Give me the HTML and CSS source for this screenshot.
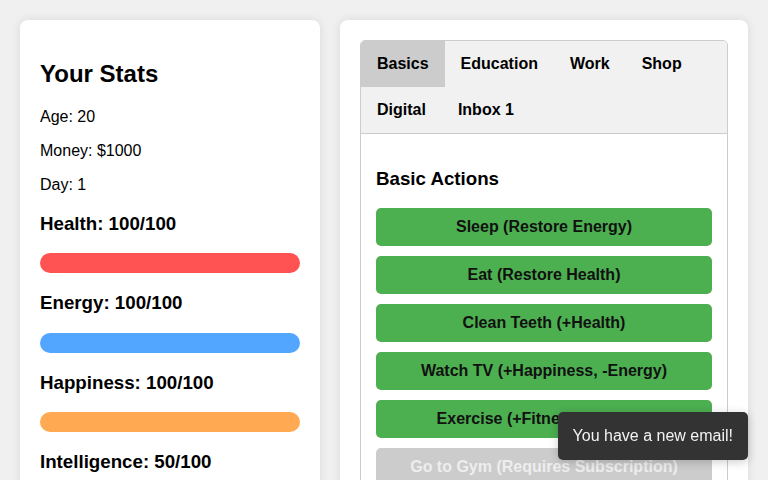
FILE: index.html
```html
<!DOCTYPE html>
<html>
<head>
<meta charset="utf-8">
<title>Life Sim</title>
<link rel="stylesheet" href="styles.css">
</head>
<body>
<div class="layout">
  <div class="card stats">
    <h2>Your Stats</h2>
    <p>Age: 20</p>
    <p>Money: $1000</p>
    <p>Day: 1</p>
    <h3>Health: 100/100</h3>
    <div class="bar bar-health"></div>
    <h3>Energy: 100/100</h3>
    <div class="bar bar-energy"></div>
    <h3>Happiness: 100/100</h3>
    <div class="bar bar-happy"></div>
    <h3>Intelligence: 50/100</h3>
    <div class="bar bar-intel"></div>
  </div>
  <div class="card main">
    <div class="tabs">
      <div class="tab-head">
        <button class="tab active">Basics</button>
        <button class="tab">Education</button>
        <button class="tab">Work</button>
        <button class="tab">Shop</button>
        <button class="tab">Digital</button>
        <button class="tab">Inbox 1</button>
      </div>
      <div class="tab-body">
        <h3>Basic Actions</h3>
        <button class="action">Sleep (Restore Energy)</button>
        <button class="action">Eat (Restore Health)</button>
        <button class="action">Clean Teeth (+Health)</button>
        <button class="action">Watch TV (+Happiness, -Energy)</button>
        <button class="action">Exercise (+Fitness, -Energy)</button>
        <button class="action" disabled>Go to Gym (Requires Subscription)</button>
        <button class="action">Shower (+Health)</button>
      </div>
    </div>
  </div>
</div>
<div class="toast">You have a new email!</div>
</body>
</html>
```
FILE: styles.css
```css
html, body {
  margin: 0;
  padding: 0;
}
body {
  background: #f0f0f0;
  font-family: "Liberation Sans", Arial, sans-serif;
  color: #000;
}
.layout {
  display: flex;
  align-items: flex-start;
  gap: 20px;
  padding: 20px;
}
.card {
  background: #fff;
  border-radius: 8px;
  box-shadow: 0 0 10px rgba(0, 0, 0, 0.1);
  padding: 20px;
}
.stats {
  width: 260px;
  flex: none;
}
.main {
  flex: 1;
}
h2 {
  font-size: 24px;
  margin: 20px 0;
}
h3 {
  font-size: 18.72px;
  margin: 18.72px 0;
}
p {
  font-size: 16px;
  margin: 16px 0;
}
.bar {
  height: 20px;
  border-radius: 10px;
  margin: 10px 0;
}
.bar-health { background: #ff5252; }
.bar-energy { background: #52a6ff; }
.bar-happy { background: #ffaa52; }
.bar-intel { background: #a36bff; }
.tabs {
  border: 1px solid #ccc;
  border-radius: 5px;
  overflow: hidden;
}
.tab-head {
  display: flex;
  flex-wrap: wrap;
  background: #f1f1f1;
  border-bottom: 1px solid #ccc;
}
.tab {
  background: inherit;
  border: none;
  padding: 14px 16px;
  font-family: inherit;
  font-size: 16px;
  font-weight: bold;
  color: #000;
  line-height: 18px;
}
.tab.active {
  background: #ccc;
}
.tab-body {
  padding: 15px;
}
.action {
  display: block;
  width: 100%;
  background: #4caf50;
  color: #111;
  border: none;
  border-radius: 5px;
  padding: 10px;
  margin-bottom: 10px;
  font-family: inherit;
  font-size: 16px;
  font-weight: bold;
  line-height: 18px;
}
.action:disabled {
  background: #ccc;
  color: #eee;
}
.toast {
  position: fixed;
  right: 20px;
  bottom: 20px;
  background: #333;
  color: #f2f2f2;
  padding: 15px;
  border-radius: 5px;
  font-size: 16px;
  line-height: 18px;
  box-shadow: 0 2px 10px rgba(0, 0, 0, 0.2);
}
```
